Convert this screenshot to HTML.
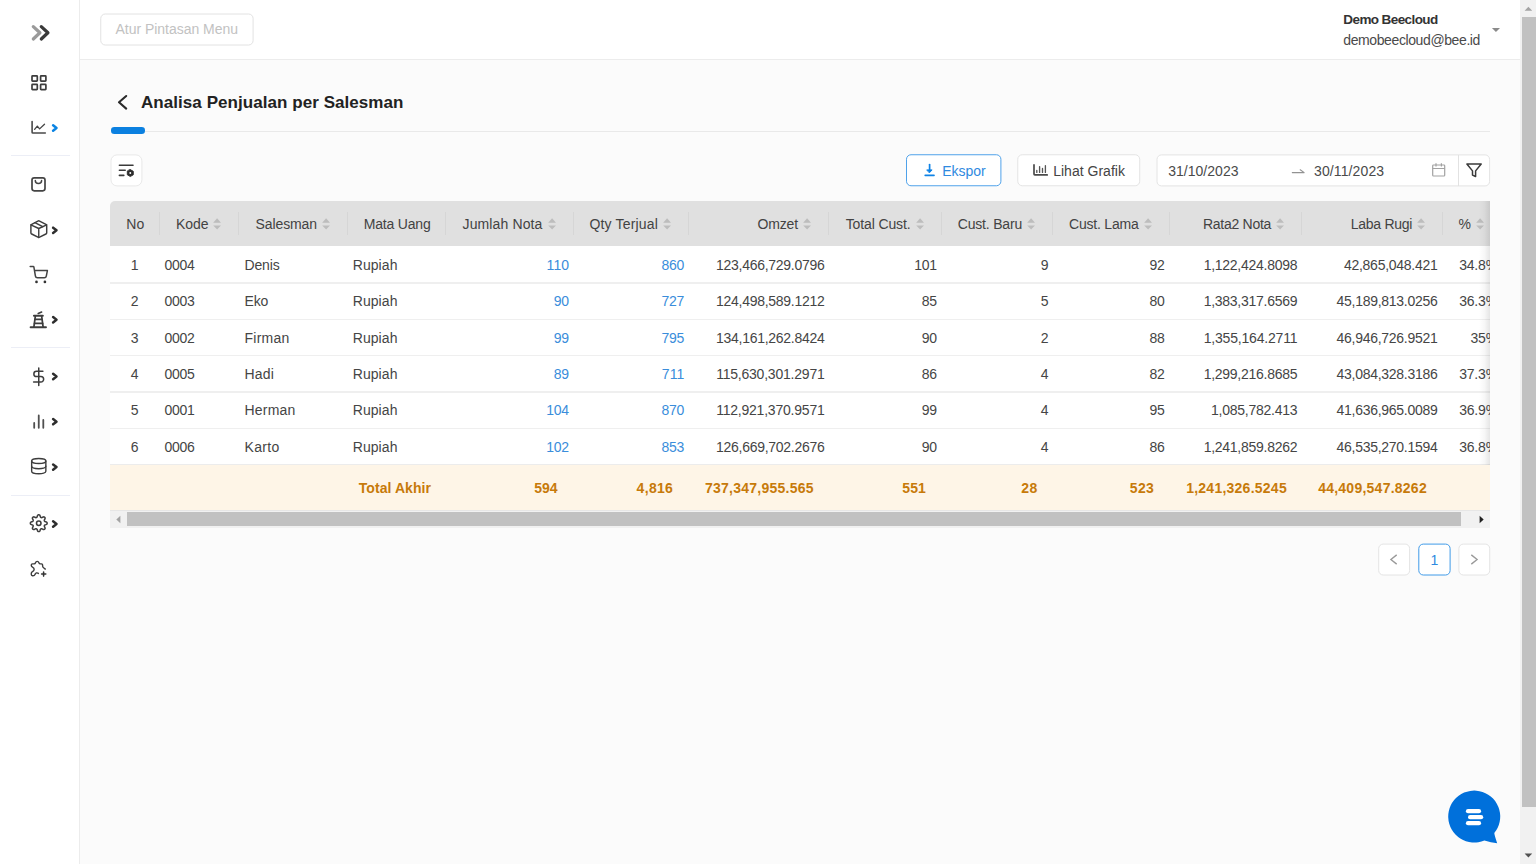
<!DOCTYPE html>
<html lang="id">
<head>
<meta charset="utf-8">
<title>Analisa Penjualan per Salesman</title>
<style>
*{box-sizing:border-box;margin:0;padding:0}
html,body{width:1536px;height:864px;overflow:hidden;background:#fbfbfb;font-family:"Liberation Sans",sans-serif}
body{position:relative}
.abs,.t,.sep,.rl,.sort,svg.ic{position:absolute}
.t{white-space:pre;line-height:20px;height:20px}
#side{position:absolute;left:0;top:0;width:80px;height:864px;background:#fff;border-right:1px solid #ececec}
#top{position:absolute;left:80px;top:0;width:1440px;height:60px;background:#fff;border-bottom:1px solid #ececec}
.div{position:absolute;left:10.5px;width:59px;height:1px;background:#eceef6}
#thead{position:absolute;left:110px;top:201px;width:1380px;height:45px;background:#e0e0e0;border-radius:5px 0 0 0}
#tbody{position:absolute;left:110px;top:246px;width:1380px;height:218.5px;background:#fff}
#tfoot{position:absolute;left:110px;top:464.5px;width:1380px;height:46px;background:#fef5e7}
.sep{top:212px;width:1px;height:23px;background:#d6d6d6}
.rl{left:110px;width:1380px;height:1.4px;background:#efefef}
.sort{top:217.7px;fill:#bdbdbd}
#clip{position:absolute;left:0;top:0;width:1490.3px;height:864px;overflow:hidden}
#shadow{position:absolute;left:1479px;top:201px;width:11.3px;height:263.5px;background:linear-gradient(to right,rgba(0,0,0,0),rgba(0,0,0,0.03) 50%,rgba(0,0,0,0.10))}
#hs{position:absolute;left:110px;top:511px;width:1380px;height:16.6px;background:#f1f1f1}
#hs b{position:absolute;left:17px;top:1.4px;width:1334.3px;height:13.6px;background:#c1c1c1}
#vs{position:absolute;left:1520px;top:0;width:16px;height:864px;background:#f1f1f1}
#vs b{position:absolute;left:2px;top:17px;width:14px;height:790px;background:#c1c1c1}
</style>
</head>
<body>

<!-- ===================== sidebar ===================== -->
<div id="side"></div>
<div class="div" style="top:154.6px"></div>
<div class="div" style="top:346.6px"></div>
<div class="div" style="top:494.7px"></div>

<svg class="ic" style="left:0;top:0" width="80" height="600" viewBox="0 0 80 600" fill="none" stroke="#3d3d3d" stroke-width="1.5" stroke-linecap="round" stroke-linejoin="round">
  <!-- expand >> -->
  <path d="M33.3 26.6 39.9 32.8 33.3 39" stroke="#9a9a9a" stroke-width="3.25"/>
  <path d="M41.3 26.6 47.9 32.8 41.3 39" stroke="#3a3a3a" stroke-width="3.25"/>
  <!-- grid -->
  <rect x="32" y="75.9" width="5.3" height="5.2" rx="0.6" stroke-width="1.7"/>
  <rect x="40.6" y="75.9" width="5.3" height="5.2" rx="0.6" stroke-width="1.7"/>
  <rect x="32" y="84.4" width="5.3" height="5.2" rx="0.6" stroke-width="1.7"/>
  <rect x="40.6" y="84.4" width="5.3" height="5.2" rx="0.6" stroke-width="1.7"/>
  <!-- line chart -->
  <path d="M32.1 121.6V132.2Q32.1 133 32.9 133H45.3" stroke-width="1.6" stroke="#4a4a4a"/>
  <path d="M34.6 129.3 37.3 126.1 39.6 128.9 44.5 124.2" stroke-width="1.3" stroke="#444"/>
  <path d="M53.1 125.35 56.5 128.00 53.1 130.65" stroke="#0b84e3" stroke-width="2.5"/>
  <!-- bag -->
  <rect x="32" y="177.8" width="13" height="13" rx="2.2" stroke-width="1.7" stroke="#444"/>
  <path d="M35.3 180.6C35.3 184.6 41.6 184.6 41.6 180.6" stroke-width="1.5" stroke="#444"/>
  <!-- box -->
  <path d="M37.9 221.05Q38.75 220.6 39.6 221.05L45.9 224.35Q46.7 224.8 46.7 225.7V232.7Q46.7 233.6 45.9 234L39.6 237.2Q38.75 237.6 37.9 237.2L31.7 234Q30.9 233.6 30.9 232.7V225.7Q30.9 224.8 31.7 224.35Z" stroke-width="1.45"/>
  <path d="M30.9 224.8 38.75 228.5 46.7 224.8M38.75 228.5V237.6" stroke-width="1.4"/>
  <path d="M34.9 222.7 42.7 226.6" stroke-width="1.5"/>
  <path d="M53.1 227.65 56.5 230.30 53.1 232.95" stroke="#2e2e2e" stroke-width="2.5"/>
  <!-- cart -->
  <path d="M30.2 266.6H33.2Q33.8 266.6 33.9 267.2L35.4 276Q35.7 277.8 37.4 277.8H44.4Q46 277.8 46.3 276.2L47.4 270.6H34.5" stroke-width="1.5" stroke="#444"/>
  <circle cx="36.5" cy="281.9" r="1.35" fill="#333" stroke="none"/>
  <circle cx="44.9" cy="281.9" r="1.35" fill="#333" stroke="none"/>
  <!-- tower -->
  <path d="M30.6 327.2H46" stroke-width="1.9"/>
  <path d="M34 315.8H42.8" stroke-width="2.1"/>
  <path d="M35.3 316.5 33.9 326.8M41.7 316.5 43.1 326.8" stroke-width="1.75"/>
  <path d="M35 319.4H42M34.5 323.4H42.6" stroke-width="1.7"/>
  <path d="M38.2 313.5 41.6 312" stroke-width="1.6"/>
  <path d="M53.1 317.10 56.5 319.75 53.1 322.40" stroke="#2e2e2e" stroke-width="2.5"/>
  <!-- dollar -->
  <path d="M38.75 368V385.4" stroke-width="1.5"/>
  <path d="M42.9 371.3H36.5A2.65 2.65 0 0 0 36.5 376.6H40.9A2.75 2.75 0 0 1 40.9 382.1H33.6" stroke-width="1.5"/>
  <path d="M53.1 373.85 56.5 376.50 53.1 379.15" stroke="#2e2e2e" stroke-width="2.5"/>
  <!-- bars -->
  <path d="M34.2 423V427.8M38.75 415.5V427.8M43.3 420V427.8" stroke-width="1.8" stroke="#505050"/>
  <path d="M53.1 419.05 56.5 421.70 53.1 424.35" stroke="#2e2e2e" stroke-width="2.5"/>
  <!-- database -->
  <ellipse cx="38.75" cy="461" rx="7.1" ry="2.5" stroke-width="1.4"/>
  <path d="M31.65 461V471.3C31.65 474.6 45.85 474.6 45.85 471.3V461" stroke-width="1.4"/>
  <path d="M31.65 466.3C31.65 469.5 45.85 469.5 45.85 466.3" stroke-width="1.4"/>
  <path d="M53.1 464.45 56.5 467.10 53.1 469.75" stroke="#2e2e2e" stroke-width="2.5"/>
  <!-- gear -->
  <path d="M47.15 523.20L47.10 523.64L46.89 524.06L46.41 524.41L45.67 524.67L45.02 524.88L44.65 525.12L44.45 525.39L44.33 525.69L44.28 526.02L44.37 526.44L44.68 527.05L45.03 527.76L45.11 528.35L44.96 528.79L44.69 529.14L44.34 529.41L43.90 529.56L43.31 529.48L42.60 529.13L41.99 528.82L41.57 528.73L41.24 528.78L40.94 528.90L40.67 529.10L40.43 529.47L40.22 530.12L39.96 530.86L39.61 531.34L39.19 531.55L38.75 531.60L38.31 531.55L37.89 531.34L37.54 530.86L37.28 530.12L37.07 529.47L36.83 529.10L36.56 528.90L36.26 528.78L35.93 528.73L35.51 528.82L34.90 529.13L34.19 529.48L33.60 529.56L33.16 529.41L32.81 529.14L32.54 528.79L32.39 528.35L32.47 527.76L32.82 527.05L33.13 526.44L33.22 526.02L33.17 525.69L33.05 525.39L32.85 525.12L32.48 524.88L31.83 524.67L31.09 524.41L30.61 524.06L30.40 523.64L30.35 523.20L30.40 522.76L30.61 522.34L31.09 521.99L31.83 521.73L32.48 521.52L32.85 521.28L33.05 521.01L33.17 520.71L33.22 520.38L33.13 519.96L32.82 519.35L32.47 518.64L32.39 518.05L32.54 517.61L32.81 517.26L33.16 516.99L33.60 516.84L34.19 516.92L34.90 517.27L35.51 517.58L35.93 517.67L36.26 517.62L36.56 517.50L36.83 517.30L37.07 516.93L37.28 516.28L37.54 515.54L37.89 515.06L38.31 514.85L38.75 514.80L39.19 514.85L39.61 515.06L39.96 515.54L40.22 516.28L40.43 516.93L40.67 517.30L40.94 517.50L41.24 517.62L41.57 517.67L41.99 517.58L42.60 517.27L43.31 516.92L43.90 516.84L44.34 516.99L44.69 517.26L44.96 517.61L45.11 518.05L45.03 518.64L44.68 519.35L44.37 519.96L44.28 520.38L44.33 520.71L44.45 521.01L44.65 521.28L45.02 521.52L45.67 521.73L46.41 521.99L46.89 522.34L47.10 522.76Z" stroke-width="1.5"/>
  <circle cx="38.75" cy="523.2" r="2.25" stroke-width="1.55"/>
  <path d="M53.1 521.35 56.5 524.00 53.1 526.65" stroke="#2e2e2e" stroke-width="2.5"/>
  <!-- puzzle + -->
  <path d="M38.4 573.4C37 572.3 35.6 573 35 574.4C34.6 575.4 33.9 575.7 33 575.7H32.4Q31.3 575.7 31.3 574.6V573.2C31.3 572.4 31.7 572 32.5 571.6C34.7 570.5 34.7 568.2 32.5 567.1C31.7 566.7 31.3 566.3 31.3 565.5V565Q31.3 563.9 32.4 563.9H34C35 563.9 35.3 563.5 35.5 562.8C36.1 560.9 38.3 560.9 38.9 562.8C39.1 563.5 39.4 563.9 40.4 563.9H41.5Q42.6 563.9 42.6 565V566C42.6 566.9 43 567.3 43.6 567.8L45.3 569.1" stroke-width="1.4"/>
  <path d="M41.6 574H45.8M43.6 571.9V576.1" stroke-width="1.55" stroke="#333"/>
</svg>

<!-- ===================== top bar ===================== -->
<div id="top"></div>
<!-- button boxes -->
<svg class="ic" style="left:0;top:0" width="1536" height="600" viewBox="0 0 1536 600" fill="#fff" stroke-width="1"><rect x="100.75" y="14.00" width="152.35" height="31.00" rx="4.5" stroke="#e2e2e2"/><rect x="111.00" y="154.90" width="30.90" height="31.00" rx="6" stroke="#e9e9e9"/><rect x="906.50" y="154.75" width="94.40" height="31.00" rx="4.5" stroke="#4fa2ea"/><rect x="1017.75" y="154.75" width="121.95" height="31.00" rx="4.5" stroke="#e4e4e4"/><rect x="1157.00" y="154.90" width="332.60" height="31.00" rx="4.5" stroke="#e4e4e4"/><rect x="1378.70" y="544.10" width="30.90" height="30.90" rx="4.5" stroke="#e4e4e4"/><rect x="1418.80" y="544.10" width="31.30" height="30.90" rx="4.5" stroke="#3f9ae8"/><rect x="1458.90" y="544.10" width="30.80" height="30.90" rx="4.5" stroke="#e4e4e4"/></svg>
<svg class="ic" style="left:1490px;top:26px" width="12" height="8" viewBox="0 0 12 8"><path d="M1.9 1.9H10L5.95 5.9z" fill="#8a8a8a"/></svg>

<!-- ===================== page title ===================== -->
<svg class="ic" style="left:114px;top:92px" width="18" height="20" viewBox="0 0 18 20" fill="none" stroke="#2a2a2a" stroke-width="2.1" stroke-linecap="round" stroke-linejoin="round"><path d="M12.2 4 5 10.3 12.2 16.6"/></svg>
<div class="abs" style="left:110.5px;top:130.7px;width:1379.8px;height:1px;background:#e9e9e9"></div>
<div class="abs" style="left:110.5px;top:127.2px;width:34.6px;height:6.6px;border-radius:3.3px;background:#0b80e0"></div>

<!-- ===================== toolbar ===================== -->
<svg class="ic" style="left:110px;top:154px" width="33" height="33" viewBox="110 154 33 33" fill="none" stroke="#3a3a3a" stroke-width="1.6" stroke-linecap="round">
  <path d="M119.4 165.2H133M119.4 170.2H125.2M119.4 175.4H123.8"/>
  <path d="M130.3 169.6 133.3 171.3V174.8L130.3 176.5 127.3 174.8V171.3Z" fill="#2c2c2c" stroke="#2c2c2c" stroke-width="0.9" stroke-linejoin="round"/>
  <circle cx="130.3" cy="173.05" r="0.95" fill="#fff" stroke="none"/>
</svg>

<svg class="ic" style="left:920px;top:160px" width="20" height="20" viewBox="920 160 20 20" fill="none" stroke="#0f83e6" stroke-width="1.7" stroke-linecap="round" stroke-linejoin="round">
  <path d="M929.6 164.6V171"/><path d="M927.1 169.9H932.1L929.6 172.6Z" fill="#0f83e6" stroke-width="1"/><path d="M925.2 175.3H934"/>
</svg>

<svg class="ic" style="left:1030px;top:160px" width="20" height="20" viewBox="1030 160 20 20" fill="none" stroke="#4a4a4a" stroke-linecap="round" stroke-linejoin="round">
  <path d="M1034 164.9V174.1Q1034 174.9 1034.8 174.9H1047.2" stroke-width="1.7"/>
  <path d="M1036.8 170.4V172.4M1039.6 166.6V172.4M1042.5 168.4V172.4M1045.4 165.7V172.4" stroke-width="1.35" stroke="#555"/>
</svg>

<div class="abs" style="left:1458px;top:155px;width:1px;height:31px;background:#e2e2e2"></div>
<svg class="ic" style="left:1288px;top:164px" width="20" height="14" viewBox="1288 164 20 14" fill="none" stroke="#929292" stroke-width="1.1" stroke-linecap="round" stroke-linejoin="round"><path d="M1292.3 172.6H1304.2L1300.2 169.8"/></svg>
<svg class="ic" style="left:1428px;top:160px" width="22" height="20" viewBox="1428 160 22 20" fill="none" stroke="#a2a2a2" stroke-width="1.2" stroke-linejoin="round">
  <rect x="1432.7" y="165" width="12" height="11" rx="0.8"/><path d="M1432.7 168.5H1444.7M1436 163.3V166.5M1441.4 163.3V166.5"/>
</svg>
<svg class="ic" style="left:1462px;top:160px" width="24" height="20" viewBox="1462 160 24 20" fill="none" stroke="#3a3a3a" stroke-width="1.5" stroke-linejoin="round"><path d="M1466.9 164H1481.2L1475.6 170.9V176.5L1472.5 175.1V170.9Z"/></svg>

<!-- ===================== table ===================== -->
<div id="thead"></div>
<div id="tbody"></div>
<div id="tfoot"></div>
<i class="rl" style="top:282.25px"></i>
<i class="rl" style="top:318.50px"></i>
<i class="rl" style="top:354.75px"></i>
<i class="rl" style="top:391.25px"></i>
<i class="rl" style="top:427.50px"></i>
<i class="rl" style="top:463.9px;height:1px;background:#ececec"></i>
<i class="rl" style="top:510px;height:1px;background:#e6e6e6"></i>
<i class="sep" style="left:158.50px"></i>
<i class="sep" style="left:238.00px"></i>
<i class="sep" style="left:347.00px"></i>
<i class="sep" style="left:445.25px"></i>
<i class="sep" style="left:572.75px"></i>
<i class="sep" style="left:687.50px"></i>
<i class="sep" style="left:828.25px"></i>
<i class="sep" style="left:941.00px"></i>
<i class="sep" style="left:1052.00px"></i>
<i class="sep" style="left:1168.50px"></i>
<i class="sep" style="left:1301.10px"></i>
<i class="sep" style="left:1441.80px"></i>
<svg class="sort" style="left:213.40px" width="8.2" height="12" viewBox="0 0 8.2 12"><path d="M4.1 0.2 8 4.7H0.2z"/><path d="M4.1 11.6 8 7.5H0.2z"/></svg>
<svg class="sort" style="left:321.90px" width="8.2" height="12" viewBox="0 0 8.2 12"><path d="M4.1 0.2 8 4.7H0.2z"/><path d="M4.1 11.6 8 7.5H0.2z"/></svg>
<svg class="sort" style="left:547.65px" width="8.2" height="12" viewBox="0 0 8.2 12"><path d="M4.1 0.2 8 4.7H0.2z"/><path d="M4.1 11.6 8 7.5H0.2z"/></svg>
<svg class="sort" style="left:662.90px" width="8.2" height="12" viewBox="0 0 8.2 12"><path d="M4.1 0.2 8 4.7H0.2z"/><path d="M4.1 11.6 8 7.5H0.2z"/></svg>
<svg class="sort" style="left:802.90px" width="8.2" height="12" viewBox="0 0 8.2 12"><path d="M4.1 0.2 8 4.7H0.2z"/><path d="M4.1 11.6 8 7.5H0.2z"/></svg>
<svg class="sort" style="left:915.65px" width="8.2" height="12" viewBox="0 0 8.2 12"><path d="M4.1 0.2 8 4.7H0.2z"/><path d="M4.1 11.6 8 7.5H0.2z"/></svg>
<svg class="sort" style="left:1026.90px" width="8.2" height="12" viewBox="0 0 8.2 12"><path d="M4.1 0.2 8 4.7H0.2z"/><path d="M4.1 11.6 8 7.5H0.2z"/></svg>
<svg class="sort" style="left:1143.90px" width="8.2" height="12" viewBox="0 0 8.2 12"><path d="M4.1 0.2 8 4.7H0.2z"/><path d="M4.1 11.6 8 7.5H0.2z"/></svg>
<svg class="sort" style="left:1275.90px" width="8.2" height="12" viewBox="0 0 8.2 12"><path d="M4.1 0.2 8 4.7H0.2z"/><path d="M4.1 11.6 8 7.5H0.2z"/></svg>
<svg class="sort" style="left:1416.60px" width="8.2" height="12" viewBox="0 0 8.2 12"><path d="M4.1 0.2 8 4.7H0.2z"/><path d="M4.1 11.6 8 7.5H0.2z"/></svg>
<svg class="sort" style="left:1475.90px" width="8.2" height="12" viewBox="0 0 8.2 12"><path d="M4.1 0.2 8 4.7H0.2z"/><path d="M4.1 11.6 8 7.5H0.2z"/></svg>
<div id="clip">
<span class="t" style="left:130.85px;top:254.98px;font-size:14px;color:#454545;">1</span>
<span class="t" style="left:164.50px;top:254.98px;font-size:14px;color:#454545;letter-spacing:-0.289px;">0004</span>
<span class="t" style="left:244.50px;top:254.98px;font-size:14px;color:#454545;letter-spacing:-0.159px;">Denis</span>
<span class="t" style="left:352.75px;top:254.98px;font-size:14px;color:#454545;letter-spacing:0.062px;">Rupiah</span>
<span class="t" style="left:546.62px;top:254.98px;font-size:14px;color:#3a8ddb;letter-spacing:0.024px;">110</span>
<span class="t" style="left:661.53px;top:254.98px;font-size:14px;color:#3a8ddb;letter-spacing:-0.320px;">860</span>
<span class="t" style="left:716.07px;top:254.98px;font-size:14px;color:#454545;letter-spacing:-0.281px;">123,466,729.0796</span>
<span class="t" style="left:914.28px;top:254.98px;font-size:14px;color:#454545;letter-spacing:-0.320px;">101</span>
<span class="t" style="left:1040.70px;top:254.98px;font-size:14px;color:#454545;">9</span>
<span class="t" style="left:1149.46px;top:254.98px;font-size:14px;color:#454545;letter-spacing:-0.289px;">92</span>
<span class="t" style="left:1203.63px;top:254.98px;font-size:14px;color:#454545;letter-spacing:-0.266px;">1,122,424.8098</span>
<span class="t" style="left:1343.93px;top:254.98px;font-size:14px;color:#454545;letter-spacing:-0.266px;">42,865,048.421</span>
<span class="t" style="left:1459.20px;top:254.98px;font-size:14px;color:#454545;letter-spacing:-0.201px;">34.8%</span>
<span class="t" style="left:130.85px;top:291.48px;font-size:14px;color:#454545;">2</span>
<span class="t" style="left:164.50px;top:291.48px;font-size:14px;color:#454545;letter-spacing:-0.289px;">0003</span>
<span class="t" style="left:244.50px;top:291.48px;font-size:14px;color:#454545;letter-spacing:-0.208px;">Eko</span>
<span class="t" style="left:352.75px;top:291.48px;font-size:14px;color:#454545;letter-spacing:0.062px;">Rupiah</span>
<span class="t" style="left:553.71px;top:291.48px;font-size:14px;color:#3a8ddb;letter-spacing:-0.289px;">90</span>
<span class="t" style="left:661.53px;top:291.48px;font-size:14px;color:#3a8ddb;letter-spacing:-0.320px;">727</span>
<span class="t" style="left:716.07px;top:291.48px;font-size:14px;color:#454545;letter-spacing:-0.281px;">124,498,589.1212</span>
<span class="t" style="left:921.71px;top:291.48px;font-size:14px;color:#454545;letter-spacing:-0.289px;">85</span>
<span class="t" style="left:1040.70px;top:291.48px;font-size:14px;color:#454545;">5</span>
<span class="t" style="left:1149.46px;top:291.48px;font-size:14px;color:#454545;letter-spacing:-0.289px;">80</span>
<span class="t" style="left:1203.63px;top:291.48px;font-size:14px;color:#454545;letter-spacing:-0.266px;">1,383,317.6569</span>
<span class="t" style="left:1336.53px;top:291.48px;font-size:14px;color:#454545;letter-spacing:-0.274px;">45,189,813.0256</span>
<span class="t" style="left:1459.20px;top:291.48px;font-size:14px;color:#454545;letter-spacing:-0.201px;">36.3%</span>
<span class="t" style="left:130.85px;top:327.73px;font-size:14px;color:#454545;">3</span>
<span class="t" style="left:164.50px;top:327.73px;font-size:14px;color:#454545;letter-spacing:-0.289px;">0002</span>
<span class="t" style="left:244.50px;top:327.73px;font-size:14px;color:#454545;letter-spacing:0.240px;">Firman</span>
<span class="t" style="left:352.75px;top:327.73px;font-size:14px;color:#454545;letter-spacing:0.062px;">Rupiah</span>
<span class="t" style="left:553.71px;top:327.73px;font-size:14px;color:#3a8ddb;letter-spacing:-0.289px;">99</span>
<span class="t" style="left:661.53px;top:327.73px;font-size:14px;color:#3a8ddb;letter-spacing:-0.320px;">795</span>
<span class="t" style="left:716.07px;top:327.73px;font-size:14px;color:#454545;letter-spacing:-0.281px;">134,161,262.8424</span>
<span class="t" style="left:921.71px;top:327.73px;font-size:14px;color:#454545;letter-spacing:-0.289px;">90</span>
<span class="t" style="left:1040.70px;top:327.73px;font-size:14px;color:#454545;">2</span>
<span class="t" style="left:1149.46px;top:327.73px;font-size:14px;color:#454545;letter-spacing:-0.289px;">88</span>
<span class="t" style="left:1203.71px;top:327.73px;font-size:14px;color:#454545;letter-spacing:-0.192px;">1,355,164.2711</span>
<span class="t" style="left:1336.53px;top:327.73px;font-size:14px;color:#454545;letter-spacing:-0.274px;">46,946,726.9521</span>
<span class="t" style="left:1470.56px;top:327.73px;font-size:14px;color:#454545;letter-spacing:-0.244px;">35%</span>
<span class="t" style="left:130.85px;top:364.10px;font-size:14px;color:#454545;">4</span>
<span class="t" style="left:164.50px;top:364.10px;font-size:14px;color:#454545;letter-spacing:-0.289px;">0005</span>
<span class="t" style="left:244.50px;top:364.10px;font-size:14px;color:#454545;letter-spacing:0.176px;">Hadi</span>
<span class="t" style="left:352.75px;top:364.10px;font-size:14px;color:#454545;letter-spacing:0.062px;">Rupiah</span>
<span class="t" style="left:553.71px;top:364.10px;font-size:14px;color:#3a8ddb;letter-spacing:-0.289px;">89</span>
<span class="t" style="left:661.87px;top:364.10px;font-size:14px;color:#3a8ddb;letter-spacing:0.024px;">711</span>
<span class="t" style="left:716.13px;top:364.10px;font-size:14px;color:#454545;letter-spacing:-0.216px;">115,630,301.2971</span>
<span class="t" style="left:921.71px;top:364.10px;font-size:14px;color:#454545;letter-spacing:-0.289px;">86</span>
<span class="t" style="left:1040.70px;top:364.10px;font-size:14px;color:#454545;">4</span>
<span class="t" style="left:1149.46px;top:364.10px;font-size:14px;color:#454545;letter-spacing:-0.289px;">82</span>
<span class="t" style="left:1203.63px;top:364.10px;font-size:14px;color:#454545;letter-spacing:-0.266px;">1,299,216.8685</span>
<span class="t" style="left:1336.53px;top:364.10px;font-size:14px;color:#454545;letter-spacing:-0.274px;">43,084,328.3186</span>
<span class="t" style="left:1459.20px;top:364.10px;font-size:14px;color:#454545;letter-spacing:-0.201px;">37.3%</span>
<span class="t" style="left:130.85px;top:400.48px;font-size:14px;color:#454545;">5</span>
<span class="t" style="left:164.50px;top:400.48px;font-size:14px;color:#454545;letter-spacing:-0.289px;">0001</span>
<span class="t" style="left:244.50px;top:400.48px;font-size:14px;color:#454545;letter-spacing:0.201px;">Herman</span>
<span class="t" style="left:352.75px;top:400.48px;font-size:14px;color:#454545;letter-spacing:0.062px;">Rupiah</span>
<span class="t" style="left:546.28px;top:400.48px;font-size:14px;color:#3a8ddb;letter-spacing:-0.320px;">104</span>
<span class="t" style="left:661.53px;top:400.48px;font-size:14px;color:#3a8ddb;letter-spacing:-0.320px;">870</span>
<span class="t" style="left:716.13px;top:400.48px;font-size:14px;color:#454545;letter-spacing:-0.216px;">112,921,370.9571</span>
<span class="t" style="left:921.71px;top:400.48px;font-size:14px;color:#454545;letter-spacing:-0.289px;">99</span>
<span class="t" style="left:1040.70px;top:400.48px;font-size:14px;color:#454545;">4</span>
<span class="t" style="left:1149.46px;top:400.48px;font-size:14px;color:#454545;letter-spacing:-0.289px;">95</span>
<span class="t" style="left:1211.04px;top:400.48px;font-size:14px;color:#454545;letter-spacing:-0.256px;">1,085,782.413</span>
<span class="t" style="left:1336.53px;top:400.48px;font-size:14px;color:#454545;letter-spacing:-0.274px;">41,636,965.0089</span>
<span class="t" style="left:1459.20px;top:400.48px;font-size:14px;color:#454545;letter-spacing:-0.201px;">36.9%</span>
<span class="t" style="left:130.85px;top:436.73px;font-size:14px;color:#454545;">6</span>
<span class="t" style="left:164.50px;top:436.73px;font-size:14px;color:#454545;letter-spacing:-0.289px;">0006</span>
<span class="t" style="left:244.50px;top:436.73px;font-size:14px;color:#454545;letter-spacing:0.306px;">Karto</span>
<span class="t" style="left:352.75px;top:436.73px;font-size:14px;color:#454545;letter-spacing:0.062px;">Rupiah</span>
<span class="t" style="left:546.28px;top:436.73px;font-size:14px;color:#3a8ddb;letter-spacing:-0.320px;">102</span>
<span class="t" style="left:661.53px;top:436.73px;font-size:14px;color:#3a8ddb;letter-spacing:-0.320px;">853</span>
<span class="t" style="left:716.07px;top:436.73px;font-size:14px;color:#454545;letter-spacing:-0.281px;">126,669,702.2676</span>
<span class="t" style="left:921.71px;top:436.73px;font-size:14px;color:#454545;letter-spacing:-0.289px;">90</span>
<span class="t" style="left:1040.70px;top:436.73px;font-size:14px;color:#454545;">4</span>
<span class="t" style="left:1149.46px;top:436.73px;font-size:14px;color:#454545;letter-spacing:-0.289px;">86</span>
<span class="t" style="left:1203.63px;top:436.73px;font-size:14px;color:#454545;letter-spacing:-0.266px;">1,241,859.8262</span>
<span class="t" style="left:1336.53px;top:436.73px;font-size:14px;color:#454545;letter-spacing:-0.274px;">46,535,270.1594</span>
<span class="t" style="left:1459.20px;top:436.73px;font-size:14px;color:#454545;letter-spacing:-0.201px;">36.8%</span>
<span class="t" style="left:358.80px;top:477.60px;font-size:14px;color:#c77a0a;font-weight:700;letter-spacing:0.058px;">Total Akhir</span>
<span class="t" style="left:534.15px;top:477.60px;font-size:14px;color:#c77a0a;font-weight:700;letter-spacing:0.047px;">594</span>
<span class="t" style="left:636.61px;top:477.60px;font-size:14px;color:#c77a0a;font-weight:700;letter-spacing:0.311px;">4,816</span>
<span class="t" style="left:704.95px;top:477.60px;font-size:14px;color:#c77a0a;font-weight:700;letter-spacing:0.246px;">737,347,955.565</span>
<span class="t" style="left:902.18px;top:477.60px;font-size:14px;color:#c77a0a;font-weight:700;letter-spacing:0.180px;">551</span>
<span class="t" style="left:1021.31px;top:477.60px;font-size:14px;color:#c77a0a;font-weight:700;letter-spacing:0.411px;">28</span>
<span class="t" style="left:1129.81px;top:477.60px;font-size:14px;color:#c77a0a;font-weight:700;letter-spacing:0.314px;">523</span>
<span class="t" style="left:1186.15px;top:477.60px;font-size:14px;color:#c77a0a;font-weight:700;letter-spacing:0.248px;">1,241,326.5245</span>
<span class="t" style="left:1318.15px;top:477.60px;font-size:14px;color:#c77a0a;font-weight:700;letter-spacing:0.246px;">44,409,547.8262</span>
</div>
<div id="shadow"></div>
<div id="hs"><b></b>
<svg class="ic" style="left:0;top:-0.4px" width="17" height="17" viewBox="0 0 17 17"><path d="M10.4 4.7V12.3L6.3 8.5z" fill="#a3a3a3"/></svg>
<svg class="ic" style="left:1363px;top:-0.4px" width="17" height="17" viewBox="0 0 17 17"><path d="M6.6 4.7V12.3L10.7 8.5z" fill="#202020"/></svg>
</div>

<!-- ===================== pagination ===================== -->
<svg class="ic" style="left:1386px;top:552px" width="16" height="16" viewBox="0 0 16 16" fill="none" stroke="#9a9a9a" stroke-width="1.35"><path d="M10.7 2.9 4.9 7.5 10.7 12.1"/></svg>
<svg class="ic" style="left:1466px;top:552px" width="16" height="16" viewBox="0 0 16 16" fill="none" stroke="#9a9a9a" stroke-width="1.35"><path d="M5.3 2.9 11.1 7.5 5.3 12.1"/></svg>

<!-- ===================== text ===================== -->
<span class="t" style="left:115.50px;top:19.00px;font-size:14px;color:#c2c2c2;letter-spacing:-0.026px;">Atur Pintasan Menu</span>
<span class="t" style="left:1343.30px;top:9.90px;font-size:13.5px;color:#333;font-weight:700;letter-spacing:-0.587px;">Demo Beecloud</span>
<span class="t" style="left:1343.30px;top:30.00px;font-size:14px;color:#4a4a4a;letter-spacing:-0.396px;">demobeecloud@bee.id</span>
<span class="t" style="left:141.00px;top:92.60px;font-size:17px;color:#222;font-weight:700;letter-spacing:0.057px;">Analisa Penjualan per Salesman</span>
<span class="t" style="left:942.20px;top:160.90px;font-size:14px;color:#2f8ae0;letter-spacing:-0.013px;">Ekspor</span>
<span class="t" style="left:1053.20px;top:160.90px;font-size:14px;color:#444;letter-spacing:0.017px;">Lihat Grafik</span>
<span class="t" style="left:1168.25px;top:161.10px;font-size:14px;color:#4a4a4a;letter-spacing:0.017px;">31/10/2023</span>
<span class="t" style="left:1314.00px;top:161.10px;font-size:14px;color:#4a4a4a;letter-spacing:0.122px;">30/11/2023</span>
<span class="t" style="left:126.25px;top:213.70px;font-size:14px;color:#434343;letter-spacing:0.047px;">No</span>
<span class="t" style="left:176.00px;top:213.70px;font-size:14px;color:#434343;letter-spacing:-0.051px;">Kode</span>
<span class="t" style="left:255.50px;top:213.70px;font-size:14px;color:#434343;letter-spacing:-0.096px;">Salesman</span>
<span class="t" style="left:363.75px;top:213.70px;font-size:14px;color:#434343;letter-spacing:-0.193px;">Mata Uang</span>
<span class="t" style="left:462.50px;top:213.70px;font-size:14px;color:#434343;letter-spacing:0.128px;">Jumlah Nota</span>
<span class="t" style="left:589.50px;top:213.70px;font-size:14px;color:#434343;letter-spacing:0.166px;">Qty Terjual</span>
<span class="t" style="left:757.50px;top:213.70px;font-size:14px;color:#434343;letter-spacing:-0.147px;">Omzet</span>
<span class="t" style="left:845.75px;top:213.70px;font-size:14px;color:#434343;letter-spacing:-0.126px;">Total Cust.</span>
<span class="t" style="left:957.75px;top:213.70px;font-size:14px;color:#434343;letter-spacing:-0.189px;">Cust. Baru</span>
<span class="t" style="left:1069.00px;top:213.70px;font-size:14px;color:#434343;letter-spacing:-0.209px;">Cust. Lama</span>
<span class="t" style="left:1203.00px;top:213.70px;font-size:14px;color:#434343;letter-spacing:-0.283px;">Rata2 Nota</span>
<span class="t" style="left:1350.80px;top:213.70px;font-size:14px;color:#434343;letter-spacing:-0.270px;">Laba Rugi</span>
<span class="t" style="left:1458.50px;top:213.70px;font-size:14px;color:#434343;">%</span>
<span class="t" style="left:1430.50px;top:549.60px;font-size:14px;color:#2f8ae0;">1</span>

<!-- ===================== scrollbar + chat ===================== -->
<div id="vs"><b></b>
<svg class="ic" style="left:1px;top:0" width="15" height="17" viewBox="0 0 15 17"><path d="M3.6 10.8H11.2L7.4 6.7z" fill="#a3a3a3"/></svg>
<svg class="ic" style="left:1px;top:847px" width="15" height="17" viewBox="0 0 15 17"><path d="M3.6 6.4H11.2L7.4 10.6z" fill="#505050"/></svg>
</div>
<svg class="ic" style="left:1444px;top:787px" width="60" height="60" viewBox="1444 787 60 60">
  <path d="M1494.3 833.1Q1494.6 836 1497.2 843.2Q1491 842.6 1484.4 840.5A26 26 0 1 1 1494.3 833.1Z" fill="#0070db"/>
  <rect x="1465.9" y="809.1" width="15.2" height="4.2" rx="2.1" fill="#fff"/>
  <rect x="1468" y="815.1" width="15.2" height="4.2" rx="2.1" fill="#fff"/>
  <rect x="1465.9" y="821.1" width="15.2" height="4.2" rx="2.1" fill="#fff"/>
</svg>
</body>
</html>
